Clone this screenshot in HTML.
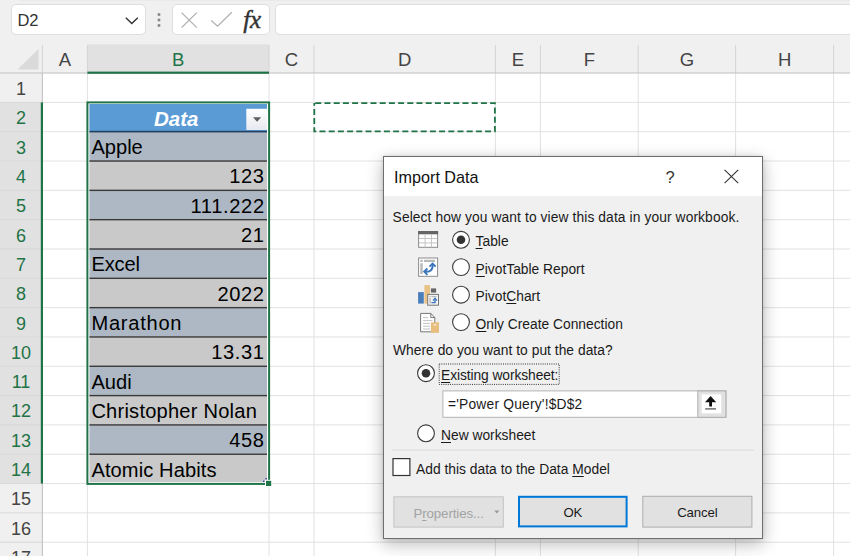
<!DOCTYPE html>
<html><head><meta charset="utf-8"><title>Import Data</title>
<style>
html,body{margin:0;padding:0;}
body{width:850px;height:556px;overflow:hidden;background:#fff;position:relative;font-family:"Liberation Sans",sans-serif;color:#222;}
.abs{position:absolute;}
svg{position:absolute;left:0;top:0;}
.t{position:absolute;white-space:nowrap;line-height:1;}
.ch{position:absolute;top:45px;height:28px;line-height:30px;font-size:18.5px;text-align:center;color:#444;}
.rh{position:absolute;left:0;width:42px;text-align:center;font-size:18px;color:#444;line-height:1;}
.cell{position:absolute;font-size:20.1px;color:#000;line-height:1;white-space:nowrap;}
.dlg{font-size:13.6px;color:#1a1a1a;}
u{text-decoration:underline;text-underline-offset:1.5px;text-decoration-thickness:1px;}
</style></head><body>

<svg width="850" height="556" viewBox="0 0 850 556">
<rect x="0" y="0" width="850" height="73" fill="#f0f0f0"/>
<rect x="0" y="73" width="42.4" height="483" fill="#f0f0f0"/>
<rect x="20" y="0" width="830" height="0.8" fill="#e9e9e9"/>
<rect x="86.90" y="73" width="1" height="483" fill="#e2e2e2"/>
<rect x="268.50" y="73" width="1" height="483" fill="#e2e2e2"/>
<rect x="313.50" y="73" width="1" height="483" fill="#e2e2e2"/>
<rect x="494.90" y="73" width="1" height="483" fill="#e2e2e2"/>
<rect x="539.90" y="73" width="1" height="483" fill="#e2e2e2"/>
<rect x="637.70" y="73" width="1" height="483" fill="#e2e2e2"/>
<rect x="735.10" y="73" width="1" height="483" fill="#e2e2e2"/>
<rect x="833.10" y="73" width="1" height="483" fill="#e2e2e2"/>
<rect x="42.4" y="101.90" width="808" height="1" fill="#e2e2e2"/>
<rect x="42.4" y="131.22" width="808" height="1" fill="#e2e2e2"/>
<rect x="42.4" y="160.54" width="808" height="1" fill="#e2e2e2"/>
<rect x="42.4" y="189.86" width="808" height="1" fill="#e2e2e2"/>
<rect x="42.4" y="219.18" width="808" height="1" fill="#e2e2e2"/>
<rect x="42.4" y="248.50" width="808" height="1" fill="#e2e2e2"/>
<rect x="42.4" y="277.82" width="808" height="1" fill="#e2e2e2"/>
<rect x="42.4" y="307.14" width="808" height="1" fill="#e2e2e2"/>
<rect x="42.4" y="336.46" width="808" height="1" fill="#e2e2e2"/>
<rect x="42.4" y="365.78" width="808" height="1" fill="#e2e2e2"/>
<rect x="42.4" y="395.10" width="808" height="1" fill="#e2e2e2"/>
<rect x="42.4" y="424.42" width="808" height="1" fill="#e2e2e2"/>
<rect x="42.4" y="453.74" width="808" height="1" fill="#e2e2e2"/>
<rect x="42.4" y="483.06" width="808" height="1" fill="#e2e2e2"/>
<rect x="42.4" y="512.38" width="808" height="1" fill="#e2e2e2"/>
<rect x="42.4" y="541.70" width="808" height="1" fill="#e2e2e2"/>
<rect x="42.4" y="571.02" width="808" height="1" fill="#e2e2e2"/>
<rect x="87.4" y="44.4" width="181.6" height="28.6" fill="#e1e1e1"/>
<rect x="0" y="102.40" width="42.4" height="381.16" fill="#e1e1e1"/>
<rect x="41.90" y="45" width="1" height="28" fill="#d4d4d4"/>
<rect x="86.90" y="45" width="1" height="28" fill="#d4d4d4"/>
<rect x="268.50" y="45" width="1" height="28" fill="#d4d4d4"/>
<rect x="313.50" y="45" width="1" height="28" fill="#d4d4d4"/>
<rect x="494.90" y="45" width="1" height="28" fill="#d4d4d4"/>
<rect x="539.90" y="45" width="1" height="28" fill="#d4d4d4"/>
<rect x="637.70" y="45" width="1" height="28" fill="#d4d4d4"/>
<rect x="735.10" y="45" width="1" height="28" fill="#d4d4d4"/>
<rect x="833.10" y="45" width="1" height="28" fill="#d4d4d4"/>
<rect x="0" y="101.90" width="42.4" height="1" fill="#d8d8d8"/>
<rect x="0" y="131.22" width="42.4" height="1" fill="#d8d8d8"/>
<rect x="0" y="160.54" width="42.4" height="1" fill="#d8d8d8"/>
<rect x="0" y="189.86" width="42.4" height="1" fill="#d8d8d8"/>
<rect x="0" y="219.18" width="42.4" height="1" fill="#d8d8d8"/>
<rect x="0" y="248.50" width="42.4" height="1" fill="#d8d8d8"/>
<rect x="0" y="277.82" width="42.4" height="1" fill="#d8d8d8"/>
<rect x="0" y="307.14" width="42.4" height="1" fill="#d8d8d8"/>
<rect x="0" y="336.46" width="42.4" height="1" fill="#d8d8d8"/>
<rect x="0" y="365.78" width="42.4" height="1" fill="#d8d8d8"/>
<rect x="0" y="395.10" width="42.4" height="1" fill="#d8d8d8"/>
<rect x="0" y="424.42" width="42.4" height="1" fill="#d8d8d8"/>
<rect x="0" y="453.74" width="42.4" height="1" fill="#d8d8d8"/>
<rect x="0" y="483.06" width="42.4" height="1" fill="#d8d8d8"/>
<rect x="0" y="512.38" width="42.4" height="1" fill="#d8d8d8"/>
<rect x="0" y="541.70" width="42.4" height="1" fill="#d8d8d8"/>
<rect x="0" y="571.02" width="42.4" height="1" fill="#d8d8d8"/>
<rect x="0" y="72.4" width="850" height="1.2" fill="#c8c8c8"/>
<rect x="41.8" y="73" width="1.2" height="483" fill="#c6c6c6"/>
<rect x="87.4" y="71.6" width="181.6" height="2.2" fill="#1f7346"/>
<rect x="40.8" y="102.40" width="2.2" height="381.16" fill="#1f7346"/>
<polygon points="38.6,49 38.6,69.4 17.4,69.4" fill="#dadada"/>
<rect x="86.4" y="101.4" width="183.6" height="383.4" fill="#fff"/>
<rect x="89.4" y="104" width="177.60" height="27.72" fill="#5b9bd5"/>
<rect x="89.4" y="131.72" width="177.60" height="29.32" fill="#adb8c4"/>
<rect x="89.4" y="161.04" width="177.60" height="29.32" fill="#c9c9c9"/>
<rect x="89.4" y="190.36" width="177.60" height="29.32" fill="#adb8c4"/>
<rect x="89.4" y="219.68" width="177.60" height="29.32" fill="#c9c9c9"/>
<rect x="89.4" y="249.00" width="177.60" height="29.32" fill="#adb8c4"/>
<rect x="89.4" y="278.32" width="177.60" height="29.32" fill="#c9c9c9"/>
<rect x="89.4" y="307.64" width="177.60" height="29.32" fill="#adb8c4"/>
<rect x="89.4" y="336.96" width="177.60" height="29.32" fill="#c9c9c9"/>
<rect x="89.4" y="366.28" width="177.60" height="29.32" fill="#adb8c4"/>
<rect x="89.4" y="395.60" width="177.60" height="29.32" fill="#c9c9c9"/>
<rect x="89.4" y="424.92" width="177.60" height="29.32" fill="#adb8c4"/>
<rect x="89.4" y="454.24" width="177.60" height="27.76" fill="#c9c9c9"/>
<rect x="89.4" y="130.82" width="177.60" height="1.6" fill="#22405f"/>
<rect x="89.4" y="160.34" width="177.60" height="1.4" fill="#3a3a3a"/>
<rect x="89.4" y="189.66" width="177.60" height="1.4" fill="#3a3a3a"/>
<rect x="89.4" y="218.98" width="177.60" height="1.4" fill="#3a3a3a"/>
<rect x="89.4" y="248.30" width="177.60" height="1.4" fill="#3a3a3a"/>
<rect x="89.4" y="277.62" width="177.60" height="1.4" fill="#3a3a3a"/>
<rect x="89.4" y="306.94" width="177.60" height="1.4" fill="#3a3a3a"/>
<rect x="89.4" y="336.26" width="177.60" height="1.4" fill="#3a3a3a"/>
<rect x="89.4" y="365.58" width="177.60" height="1.4" fill="#3a3a3a"/>
<rect x="89.4" y="394.90" width="177.60" height="1.4" fill="#3a3a3a"/>
<rect x="89.4" y="424.22" width="177.60" height="1.4" fill="#3a3a3a"/>
<rect x="89.4" y="453.54" width="177.60" height="1.4" fill="#3a3a3a"/>
<rect x="87.4" y="102.4" width="181.7" height="381.5" fill="none" stroke="#1f7346" stroke-width="2"/>
<rect x="265" y="479.8" width="7" height="7" fill="#fff"/>
<rect x="266" y="480.8" width="5.2" height="5.2" fill="#1f7346"/>
<rect x="263" y="480.6" width="1.4" height="1.4" fill="#2a3f9e"/><rect x="265.4" y="478" width="1.4" height="1.4" fill="#2a3f9e"/>
<defs><linearGradient id="fb" x1="0" y1="0" x2="0" y2="1"><stop offset="0" stop-color="#ffffff"/><stop offset="1" stop-color="#e6e9f0"/></linearGradient></defs>
<rect x="246.3" y="108.8" width="20.7" height="21.2" fill="url(#fb)"/>
<polygon points="253,117.3 261.2,117.3 257.1,121.8" fill="#5f5f5f"/>
<rect x="314.3" y="103.1" width="180.6" height="28.2" fill="none" stroke="#1f7346" stroke-width="1.8" stroke-dasharray="6 3.2" stroke-dashoffset="-1"/>
</svg>
<div class="abs" style="left:11px;top:4px;width:133px;height:29.4px;border:1px solid #dedede;border-radius:5px;background:#fff;"></div>
<div class="t" style="left:17.4px;top:12.2px;font-size:16.5px;color:#333;">D2</div>
<div class="abs" style="left:172.4px;top:4px;width:95.5px;height:29.4px;border:1px solid #dedede;border-radius:5px;background:#fff;"></div>
<div class="abs" style="left:275.4px;top:4px;width:600px;height:29.4px;border:1px solid #dedede;border-radius:5px;background:#fff;"></div>
<svg width="850" height="44" viewBox="0 0 850 44">
<polyline points="125.8,17.8 131.8,23.6 137.8,17.8" fill="none" stroke="#333" stroke-width="1.4"/>
<rect x="157.7" y="13.2" width="2.6" height="2.6" fill="#858585"/>
<rect x="157.7" y="18.7" width="2.6" height="2.6" fill="#858585"/>
<rect x="157.7" y="24.2" width="2.6" height="2.6" fill="#858585"/>
<path d="M181.6 12.6 L196.8 27.6 M196.8 12.6 L181.6 27.6" stroke="#b0b0b0" stroke-width="1.3" fill="none"/>
<path d="M211.2 20.4 L217.6 26.2 L231.8 12.2" stroke="#b0b0b0" stroke-width="1.3" fill="none"/>
</svg>
<div class="t" style="left:243.2px;top:6.6px;font-family:'Liberation Serif',serif;font-style:italic;font-size:25px;color:#333;letter-spacing:-0.2px;-webkit-text-stroke:0.45px #333;">fx</div>
<div class="ch" style="left:42.4px;width:45.0px;color:#444;">A</div>
<div class="ch" style="left:87.4px;width:181.6px;color:#1f7346;">B</div>
<div class="ch" style="left:269.0px;width:45.0px;color:#444;">C</div>
<div class="ch" style="left:314.0px;width:181.4px;color:#444;">D</div>
<div class="ch" style="left:495.4px;width:45.0px;color:#444;">E</div>
<div class="ch" style="left:540.4px;width:97.8px;color:#444;">F</div>
<div class="ch" style="left:638.2px;width:97.4px;color:#444;">G</div>
<div class="ch" style="left:735.6px;width:98.0px;color:#444;">H</div>
<div class="rh" style="top:79.90px;color:#444;">1</div>
<div class="rh" style="top:109.26px;color:#1f7346;">2</div>
<div class="rh" style="top:138.58px;color:#1f7346;">3</div>
<div class="rh" style="top:167.90px;color:#1f7346;">4</div>
<div class="rh" style="top:197.22px;color:#1f7346;">5</div>
<div class="rh" style="top:226.54px;color:#1f7346;">6</div>
<div class="rh" style="top:255.86px;color:#1f7346;">7</div>
<div class="rh" style="top:285.18px;color:#1f7346;">8</div>
<div class="rh" style="top:314.50px;color:#1f7346;">9</div>
<div class="rh" style="top:343.82px;color:#1f7346;">10</div>
<div class="rh" style="top:373.14px;color:#1f7346;">11</div>
<div class="rh" style="top:402.46px;color:#1f7346;">12</div>
<div class="rh" style="top:431.78px;color:#1f7346;">13</div>
<div class="rh" style="top:461.10px;color:#1f7346;">14</div>
<div class="rh" style="top:490.42px;color:#444;">15</div>
<div class="rh" style="top:519.74px;color:#444;">16</div>
<div class="rh" style="top:549.06px;color:#444;">17</div>
<div class="t" style="left:154px;top:108.6px;font-size:20.5px;font-weight:bold;font-style:italic;color:#fff;">Data</div>
<div class="cell" style="left:91.4px;top:137.14px;letter-spacing:0px;">Apple</div>
<div class="cell" style="right:585.3px;top:166.46px;letter-spacing:0.65px;">123</div>
<div class="cell" style="right:585.3px;top:195.78px;letter-spacing:0.65px;">111.222</div>
<div class="cell" style="right:585.3px;top:225.10px;letter-spacing:0.65px;">21</div>
<div class="cell" style="left:91.4px;top:254.42px;letter-spacing:-0.15px;">Excel</div>
<div class="cell" style="right:585.3px;top:283.74px;letter-spacing:0.65px;">2022</div>
<div class="cell" style="left:91.4px;top:313.06px;letter-spacing:0.75px;">Marathon</div>
<div class="cell" style="right:585.3px;top:342.38px;letter-spacing:0.65px;">13.31</div>
<div class="cell" style="left:91.4px;top:371.70px;letter-spacing:0px;">Audi</div>
<div class="cell" style="left:91.4px;top:401.02px;letter-spacing:0.22px;">Christopher Nolan</div>
<div class="cell" style="right:585.3px;top:430.34px;letter-spacing:0.65px;">458</div>
<div class="cell" style="left:91.4px;top:459.66px;letter-spacing:0.1px;">Atomic Habits</div>
<div class="abs" style="left:383px;top:156px;width:377.8px;height:380.8px;border:1px solid #6e6e6e;background:#f0f0f0;box-shadow:0 5px 16px rgba(0,0,0,0.28),0 0 4px rgba(0,0,0,0.12);"></div>
<div class="abs" style="left:384px;top:157px;width:377.8px;height:39px;background:#fff;"></div>
<svg width="850" height="556" viewBox="0 0 850 556">
<path d="M724.6 169.8 L738.2 183.2 M738.2 169.8 L724.6 183.2" stroke="#333" stroke-width="1.1" fill="none"/>
<circle cx="461" cy="239.8" r="8.4" fill="#fff" stroke="#3a3a3a" stroke-width="1.1"/>
<circle cx="461" cy="239.8" r="4.3" fill="#333"/>
<circle cx="461" cy="267.1" r="8.4" fill="#fff" stroke="#3a3a3a" stroke-width="1.1"/>
<circle cx="461" cy="294.7" r="8.4" fill="#fff" stroke="#3a3a3a" stroke-width="1.1"/>
<circle cx="461" cy="322.1" r="8.4" fill="#fff" stroke="#3a3a3a" stroke-width="1.1"/>
<circle cx="426" cy="373.2" r="8.4" fill="#fff" stroke="#3a3a3a" stroke-width="1.1"/>
<circle cx="426" cy="373.2" r="4.3" fill="#333"/>
<circle cx="426" cy="433.3" r="8.4" fill="#fff" stroke="#3a3a3a" stroke-width="1.1"/>
<rect x="439.2" y="364" width="120" height="20.4" fill="none" stroke="#333" stroke-width="1" stroke-dasharray="1 1.2"/>
<rect x="442.9" y="390.9" width="283" height="26.4" fill="#fff" stroke="#b4b4b4" stroke-width="1"/>
<rect x="697.8" y="390.9" width="28.1" height="26.4" fill="#e1e1e1" stroke="#adadad" stroke-width="1"/>
<rect x="701.6" y="394.4" width="19.6" height="19" fill="#fff"/>
<path d="M710.6 396 L705 402.2 L709.2 402.2 L709.2 406.6 L712 406.6 L712 402.2 L716.2 402.2 Z" fill="#111"/>
<rect x="705.2" y="408.2" width="10.8" height="1.4" fill="#666"/>
<rect x="392.4" y="449.6" width="361.3" height="1" fill="#dadada"/>
<rect x="393" y="458.6" width="16.9" height="16.9" fill="#fff" stroke="#333" stroke-width="1.2"/>
<rect x="393.9" y="496.8" width="109.4" height="30.3" fill="#e1e1e1" stroke="#c4c4c4" stroke-width="1"/>
<polygon points="494.2,510.6 499.4,510.6 496.8,513.4" fill="#9a9a9a"/>
<rect x="519" y="496.8" width="107.6" height="29.6" fill="#e1e1e1" stroke="#0078d7" stroke-width="2"/>
<rect x="642.8" y="496.3" width="109.1" height="30.8" fill="#e1e1e1" stroke="#adadad" stroke-width="1"/>
<rect x="418.6" y="231.5" width="19" height="15.8" fill="#fff" stroke="#8a8a8a" stroke-width="1"/>
<rect x="418.1" y="231" width="20" height="3.3" fill="#666"/>
<rect x="424.6" y="234.3" width="1" height="13" fill="#c4c4c4"/>
<rect x="430.9" y="234.3" width="1" height="13" fill="#c4c4c4"/>
<rect x="419" y="238.0" width="18.4" height="1" fill="#c4c4c4"/>
<rect x="419" y="242.4" width="18.4" height="1" fill="#c4c4c4"/>
<rect x="418.6" y="258" width="19" height="18.3" fill="#fff" stroke="#8c8c8c" stroke-width="1"/>
<rect x="420.3" y="259.8" width="2.4" height="2.2" fill="#b8b8b8"/><rect x="424" y="259.8" width="11" height="2.2" fill="#b8b8b8"/><rect x="420.3" y="263.2" width="2.4" height="10.8" fill="#b8b8b8"/>
<path d="M424.6 271.6 C430.6 272.6 433 269.6 432.7 264" fill="none" stroke="#3b76bd" stroke-width="1.9"/>
<path d="M427.4 268.5 L424.2 271.6 L427.4 274.8" fill="none" stroke="#3b76bd" stroke-width="1.9"/>
<path d="M429.5 266.6 L432.6 263.5 L435.7 266.6" fill="none" stroke="#3b76bd" stroke-width="1.9"/>
<rect x="418.1" y="292.1" width="5.7" height="11.5" fill="#4a7ebb"/>
<rect x="424.4" y="285.1" width="5.6" height="18.5" fill="#e9c285"/>
<rect x="430.9" y="288.4" width="5.2" height="4.2" fill="#666"/>
<rect x="427.7" y="294.4" width="10.8" height="10.8" fill="#f4f4f4" stroke="#777" stroke-width="1"/>
<rect x="429.4" y="296" width="1.4" height="1.2" fill="#bbb"/><rect x="431.6" y="296" width="5" height="1.2" fill="#bbb"/><rect x="429.4" y="298" width="1.4" height="5.4" fill="#bbb"/>
<path d="M431.4 302.6 L435 302.6 L435 298.6" fill="none" stroke="#3b76bd" stroke-width="1.4"/><path d="M433 300.6 L435 298.2 L437 300.6" fill="none" stroke="#3b76bd" stroke-width="1.3"/>
<path d="M420.6 313.4 L430.8 313.4 L434.8 317.6 L434.8 331.8 L420.6 331.8 Z" fill="#fff" stroke="#777" stroke-width="1"/>
<path d="M430.8 313.4 L430.8 317.6 L434.8 317.6" fill="none" stroke="#777" stroke-width="1"/>
<rect x="423" y="317.1" width="5" height="1" fill="#c2c2c2"/>
<rect x="423" y="320.1" width="9.399999999999977" height="1" fill="#c2c2c2"/>
<rect x="423" y="322.9" width="7" height="1" fill="#c2c2c2"/>
<rect x="423" y="325.7" width="7" height="1" fill="#c2c2c2"/>
<rect x="423" y="328.5" width="7" height="1" fill="#c2c2c2"/>
<rect x="430.9" y="322.3" width="8.1" height="10.5" fill="#e8be7e"/>
<rect x="433.6" y="324.4" width="2.8" height="1" fill="#fff"/>
</svg>
<div class="t" style="left:394px;top:168.89px;font-size:16.2px;color:#111;letter-spacing:0px;">Import Data</div>
<div class="t" style="left:665.6px;top:169.03px;font-size:16.5px;color:#333;letter-spacing:0px;">?</div>
<div class="t" style="left:392.6px;top:210.62px;font-size:13.8px;color:#1a1a1a;letter-spacing:0.1px;">Select how you want to view this data in your workbook.</div>
<div class="t" style="left:475.6px;top:234.92px;font-size:13.8px;color:#1a1a1a;letter-spacing:0px;"><u>T</u>able</div>
<div class="t" style="left:475.6px;top:262.62px;font-size:13.8px;color:#1a1a1a;letter-spacing:0px;"><u>P</u>ivotTable Report</div>
<div class="t" style="left:475.6px;top:289.92px;font-size:13.8px;color:#1a1a1a;letter-spacing:0px;">Pivot<u>C</u>hart</div>
<div class="t" style="left:475.6px;top:317.62px;font-size:13.8px;color:#1a1a1a;letter-spacing:0px;"><u>O</u>nly Create Connection</div>
<div class="t" style="left:393px;top:343.52px;font-size:13.8px;color:#1a1a1a;letter-spacing:0.03px;">Where do you want to put the data?</div>
<div class="t" style="left:441px;top:368.52px;font-size:13.8px;color:#1a1a1a;letter-spacing:-0.08px;"><u>E</u>xisting worksheet:</div>
<div class="t" style="left:448px;top:397.62px;font-size:13.8px;color:#1a1a1a;letter-spacing:0.2px;">='Power Query'!$D$2</div>
<div class="t" style="left:441px;top:428.52px;font-size:13.8px;color:#1a1a1a;letter-spacing:0px;"><u>N</u>ew worksheet</div>
<div class="t" style="left:416px;top:462.82px;font-size:13.8px;color:#1a1a1a;letter-spacing:0.02px;">Add this data to the Data <u>M</u>odel</div>
<div class="t" style="left:413.4px;top:506.64px;font-size:13.3px;color:#a3a3a3;letter-spacing:-0.1px;">P<u>r</u>operties...</div>
<div class="t" style="left:563.6px;top:505.63px;font-size:13.2px;color:#1a1a1a;letter-spacing:-0.4px;">OK</div>
<div class="t" style="left:677.2px;top:505.63px;font-size:13.2px;color:#1a1a1a;letter-spacing:-0.1px;">Cancel</div>
</body></html>
